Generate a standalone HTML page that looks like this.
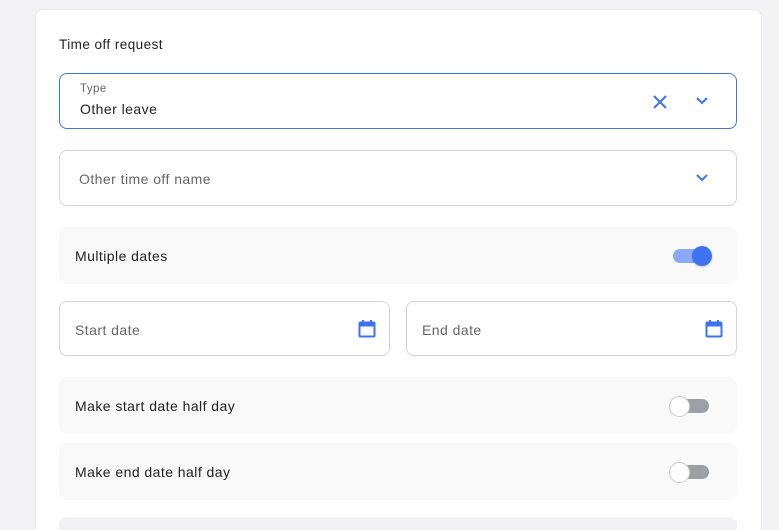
<!DOCTYPE html>
<html style="width:779px;height:530px;overflow:hidden"><head><style>
body{margin:0;width:779px;height:530px;background:#f3f3f6;font-family:"Liberation Sans",sans-serif;overflow:hidden;position:relative;color:#222}
.card{position:absolute;left:35px;top:9px;width:727px;height:530px;background:#fff;border:1px solid #e8e8ec;border-bottom:none;border-radius:8px 8px 0 0;box-sizing:border-box}
.abs{position:absolute;letter-spacing:0.45px}
.box{position:absolute;box-sizing:border-box;border:1px solid #d3d3d6;border-radius:8px;background:#fff}
.row{position:absolute;left:59px;width:678px;background:#f9f9f9;border-radius:8px}
.t{position:absolute;font-size:14px;letter-spacing:0.45px}
</style></head><body>
<div class="card"></div>
<div class="t" style="left:59px;top:37px;font-size:13.5px;color:#222">Time off request</div>
<div class="box" style="left:59px;top:73px;width:678px;height:56px;border-color:#3d73f0">
  <div class="abs" style="left:20px;top:9px;font-size:11.5px;color:#666">Type</div>
  <div class="abs" style="left:20px;top:27px;font-size:14px;color:#222">Other leave</div>
  <svg class="abs" style="left:592px;top:20px" width="16" height="16"><path d="M2 2L14 14M14 2L2 14" stroke="#3d73f0" stroke-width="2"/></svg>
  <svg class="abs" style="left:635px;top:22px" width="14" height="10"><path d="M2 2L7 7L12 2" stroke="#3d73f0" stroke-width="2" fill="none"/></svg>
</div>
<div class="box" style="left:59px;top:150px;width:678px;height:56px">
  <div class="abs" style="left:19px;top:20px;font-size:14px;color:#666">Other time off name</div>
  <svg class="abs" style="left:635px;top:22px" width="14" height="10"><path d="M2 2L7 7L12 2" stroke="#3d73f0" stroke-width="2" fill="none"/></svg>
</div>
<div class="row" style="top:227px;height:57px">
  <div class="abs" style="left:16px;top:21px;font-size:14px">Multiple dates</div>
  <div class="abs" style="left:614px;top:22px;width:36px;height:14px;border-radius:7px;background:#8aaaf5"></div>
  <div class="abs" style="left:633px;top:19px;width:20px;height:20px;border-radius:50%;background:#3d73f0;box-shadow:0 1px 2px rgba(0,0,0,.2)"></div>
</div>
<div class="box" style="left:59px;top:301px;width:331px;height:55px">
  <div class="abs" style="left:15px;top:20px;font-size:14px;color:#666">Start date</div>
  <svg class="abs" style="left:298px;top:17px" width="18" height="20"><rect x="1.5" y="3.5" width="15" height="14" rx="1" fill="none" stroke="#3d73f0" stroke-width="2"/><rect x="1.5" y="3.5" width="15" height="4" fill="#3d73f0"/><path d="M5 1v4M13 1v4" stroke="#3d73f0" stroke-width="2"/></svg>
</div>
<div class="box" style="left:406px;top:301px;width:331px;height:55px">
  <div class="abs" style="left:15px;top:20px;font-size:14px;color:#666">End date</div>
  <svg class="abs" style="left:298px;top:17px" width="18" height="20"><rect x="1.5" y="3.5" width="15" height="14" rx="1" fill="none" stroke="#3d73f0" stroke-width="2"/><rect x="1.5" y="3.5" width="15" height="4" fill="#3d73f0"/><path d="M5 1v4M13 1v4" stroke="#3d73f0" stroke-width="2"/></svg>
</div>
<div class="row" style="top:377px;height:57px">
  <div class="abs" style="left:16px;top:21px;font-size:14px">Make start date half day</div>
  <div class="abs" style="left:617px;top:22px;width:33px;height:14px;border-radius:7px;background:#9aa0a6"></div>
  <div class="abs" style="left:610px;top:19px;width:19px;height:19px;border-radius:50%;background:#fff;border:1px solid #ccc"></div>
</div>
<div class="row" style="top:443px;height:57px">
  <div class="abs" style="left:16px;top:21px;font-size:14px">Make end date half day</div>
  <div class="abs" style="left:617px;top:22px;width:33px;height:14px;border-radius:7px;background:#9aa0a6"></div>
  <div class="abs" style="left:610px;top:19px;width:19px;height:19px;border-radius:50%;background:#fff;border:1px solid #ccc"></div>
</div>
<div class="row" style="top:517px;height:13px;background:#f1f1f3;border-radius:8px 8px 0 0"></div>
</body></html>
